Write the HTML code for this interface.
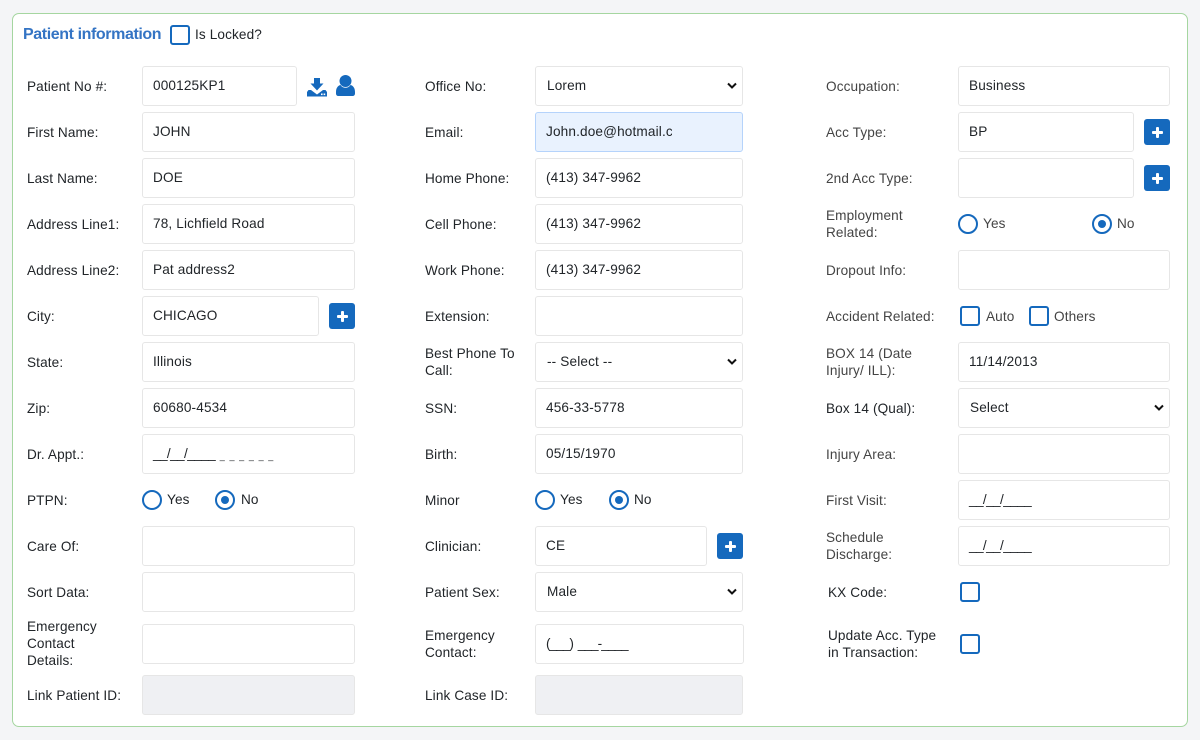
<!DOCTYPE html>
<html lang="en">
<head>
<meta charset="utf-8">
<title>Patient information</title>
<style>
html,body{margin:0;padding:0;width:1200px;height:740px;overflow:hidden;background:#f4f5f7;font-family:"Liberation Sans",Arial,sans-serif;font-size:13.6px;color:#212529}
#card{position:absolute;left:12px;top:13px;width:1174px;height:712px;background:#fff;border:1px solid #a5d6a0;border-radius:7px}
.l,.i,.t,.b,.c,.r,svg.a{position:absolute}
.l{line-height:17px;white-space:nowrap;letter-spacing:.12px}
.g{color:#444}
.i{height:38px;line-height:38px;box-sizing:content-box;border:1px solid #e6e6e6;border-radius:3px;background:#fff;padding:0;overflow:hidden;white-space:nowrap}
.i span{position:absolute;left:10px;top:0;white-space:pre;letter-spacing:.15px}
.i span.u{letter-spacing:-.6px}
.i span.u i{font-style:normal;font-size:9px;word-spacing:2.2px;letter-spacing:0;position:relative;top:1px}
.i span.p{letter-spacing:-.95px;word-spacing:2px}
.s span{left:11px}
.s svg{position:absolute;right:5px;top:15px}
.b{width:26px;height:26px;background:#1569bd;border-radius:3px}
.b:before{content:"";position:absolute;left:7.5px;top:11.5px;width:11px;height:3px;background:#fff;border-radius:1px}
.b:after{content:"";position:absolute;left:11.5px;top:7.5px;width:3px;height:11px;background:#fff;border-radius:1px}
.c{width:16px;height:16px;border:2px solid #1569bd;border-radius:3px;background:#fff}
.r{width:16px;height:16px;border:2px solid #1569bd;border-radius:50%;background:#fff}
.r.on:after{content:"";position:absolute;left:4px;top:4px;width:8px;height:8px;border-radius:50%;background:#1569bd}
.dis{background:#eff0f3}
.foc{background:#e9f2fe;border-color:#b5d3fb}
#title{position:absolute;left:23px;top:25px;font-size:16px;line-height:19px;font-weight:bold;color:#3474c4;letter-spacing:-.4px}
</style>
</head>
<body>
<div id="card"></div>
<div id="title">Patient information</div>
<div class="c" style="left:170px;top:25px"></div>
<div class="l" style="left:195px;top:26px">Is Locked?</div>

<!-- column 1 -->
<div class="l" style="left:27px;top:78px">Patient No #:</div>
<div class="i" style="left:142px;top:66px;width:153px"><span>000125KP1</span></div>
<svg class="a" style="left:307px;top:78px" width="20" height="19" viewBox="0 0 20 19"><path fill="#1569bd" d="M7 0h6v5.500h3.500L10 12.500 3.500 5.500H7z"/><path fill="#1569bd" d="M1.500 12H4l6 4.500L16 12h2.500l1.500 2v4.500H0V14z"/><rect x="14" y="15.500" width="1.600" height="1.600" fill="#fff"/><rect x="16.600" y="15.500" width="1.600" height="1.600" fill="#fff"/></svg>
<svg class="a" style="left:336px;top:75px" width="19" height="21" viewBox="0 0 19 21"><circle cx="9.500" cy="6" r="6" fill="#1569bd"/><path fill="#1569bd" d="M0 17c0-4 2-6.500 4.500-7 1.200 1.800 3 2.800 5 2.800s3.800-1 5-2.800c2.500.5 4.500 3 4.500 7v1.500c0 1.500-1 2.500-2.500 2.500h-14C1 21 0 20 0 18.500z"/></svg>
<div class="l" style="left:27px;top:124px">First Name:</div>
<div class="i" style="left:142px;top:112px;width:211px"><span>JOHN</span></div>
<div class="l" style="left:27px;top:170px">Last Name:</div>
<div class="i" style="left:142px;top:158px;width:211px"><span>DOE</span></div>
<div class="l" style="left:27px;top:216px">Address Line1:</div>
<div class="i" style="left:142px;top:204px;width:211px"><span>78, Lichfield Road</span></div>
<div class="l" style="left:27px;top:262px">Address Line2:</div>
<div class="i" style="left:142px;top:250px;width:211px"><span>Pat address2</span></div>
<div class="l" style="left:27px;top:308px">City:</div>
<div class="i" style="left:142px;top:296px;width:175px"><span>CHICAGO</span></div>
<div class="b" style="left:329px;top:303px"></div>
<div class="l" style="left:27px;top:354px">State:</div>
<div class="i" style="left:142px;top:342px;width:211px"><span>Illinois</span></div>
<div class="l" style="left:27px;top:400px">Zip:</div>
<div class="i" style="left:142px;top:388px;width:211px"><span>60680-4534</span></div>
<div class="l" style="left:27px;top:446px">Dr. Appt.:</div>
<div class="i" style="left:142px;top:434px;width:211px"><span class="u">__/__/____<i> _ _ _ _ _ _</i></span></div>
<div class="l" style="left:27px;top:492px">PTPN:</div>
<div class="r" style="left:142px;top:490px"></div>
<div class="l" style="left:167px;top:491px">Yes</div>
<div class="r on" style="left:215px;top:490px"></div>
<div class="l" style="left:241px;top:491px">No</div>
<div class="l" style="left:27px;top:538px">Care Of:</div>
<div class="i" style="left:142px;top:526px;width:211px"></div>
<div class="l" style="left:27px;top:584px">Sort Data:</div>
<div class="i" style="left:142px;top:572px;width:211px"></div>
<div class="l" style="left:27px;top:618px">Emergency<br>Contact<br>Details:</div>
<div class="i" style="left:142px;top:624px;width:211px"></div>
<div class="l" style="left:27px;top:687px">Link Patient ID:</div>
<div class="i dis" style="left:142px;top:675px;width:211px"></div>

<!-- column 2 -->
<div class="l" style="left:425px;top:78px">Office No:</div>
<div class="i s" style="left:535px;top:66px;width:206px"><span>Lorem</span><svg width="10" height="8" viewBox="0 0 10 8"><path d="M1 1.500l4 4 4-4" fill="none" stroke="#111" stroke-width="2"/></svg></div>
<div class="l" style="left:425px;top:124px">Email:</div>
<div class="i foc" style="left:535px;top:112px;width:206px"><span style="width:126px;overflow:hidden">John.doe@hotmail.com</span></div>
<div class="l" style="left:425px;top:170px">Home Phone:</div>
<div class="i" style="left:535px;top:158px;width:206px"><span>(413) 347-9962</span></div>
<div class="l" style="left:425px;top:216px">Cell Phone:</div>
<div class="i" style="left:535px;top:204px;width:206px"><span>(413) 347-9962</span></div>
<div class="l" style="left:425px;top:262px">Work Phone:</div>
<div class="i" style="left:535px;top:250px;width:206px"><span>(413) 347-9962</span></div>
<div class="l" style="left:425px;top:308px">Extension:</div>
<div class="i" style="left:535px;top:296px;width:206px"></div>
<div class="l" style="left:425px;top:345px">Best Phone To<br>Call:</div>
<div class="i s" style="left:535px;top:342px;width:206px"><span>-- Select --</span><svg width="10" height="8" viewBox="0 0 10 8"><path d="M1 1.500l4 4 4-4" fill="none" stroke="#111" stroke-width="2"/></svg></div>
<div class="l" style="left:425px;top:400px">SSN:</div>
<div class="i" style="left:535px;top:388px;width:206px"><span>456-33-5778</span></div>
<div class="l" style="left:425px;top:446px">Birth:</div>
<div class="i" style="left:535px;top:434px;width:206px"><span>05/15/1970</span></div>
<div class="l" style="left:425px;top:492px">Minor</div>
<div class="r" style="left:535px;top:490px"></div>
<div class="l" style="left:560px;top:491px">Yes</div>
<div class="r on" style="left:609px;top:490px"></div>
<div class="l" style="left:634px;top:491px">No</div>
<div class="l" style="left:425px;top:538px">Clinician:</div>
<div class="i" style="left:535px;top:526px;width:170px"><span>CE</span></div>
<div class="b" style="left:717px;top:533px"></div>
<div class="l" style="left:425px;top:584px">Patient Sex:</div>
<div class="i s" style="left:535px;top:572px;width:206px"><span>Male</span><svg width="10" height="8" viewBox="0 0 10 8"><path d="M1 1.500l4 4 4-4" fill="none" stroke="#111" stroke-width="2"/></svg></div>
<div class="l" style="left:425px;top:627px">Emergency<br>Contact:</div>
<div class="i" style="left:535px;top:624px;width:207px"><span class="p">(___) ___-____</span></div>
<div class="l" style="left:425px;top:687px">Link Case ID:</div>
<div class="i dis" style="left:535px;top:675px;width:206px"></div>

<!-- column 3 -->
<div class="l g" style="left:826px;top:78px">Occupation:</div>
<div class="i" style="left:958px;top:66px;width:210px"><span>Business</span></div>
<div class="l g" style="left:826px;top:124px">Acc Type:</div>
<div class="i" style="left:958px;top:112px;width:174px"><span>BP</span></div>
<div class="b" style="left:1144px;top:119px"></div>
<div class="l g" style="left:826px;top:170px">2nd Acc Type:</div>
<div class="i" style="left:958px;top:158px;width:174px"></div>
<div class="b" style="left:1144px;top:165px"></div>
<div class="l g" style="left:826px;top:207px">Employment<br>Related:</div>
<div class="r" style="left:958px;top:214px"></div>
<div class="l g" style="left:983px;top:215px">Yes</div>
<div class="r on" style="left:1092px;top:214px"></div>
<div class="l g" style="left:1117px;top:215px">No</div>
<div class="l g" style="left:826px;top:262px">Dropout Info:</div>
<div class="i" style="left:958px;top:250px;width:210px"></div>
<div class="l g" style="left:826px;top:308px">Accident Related:</div>
<div class="c" style="left:960px;top:306px"></div>
<div class="l g" style="left:986px;top:308px">Auto</div>
<div class="c" style="left:1029px;top:306px"></div>
<div class="l g" style="left:1054px;top:308px">Others</div>
<div class="l g" style="left:826px;top:345px">BOX 14 (Date<br>Injury/ ILL):</div>
<div class="i" style="left:958px;top:342px;width:210px"><span>11/14/2013</span></div>
<div class="l" style="left:826px;top:400px">Box 14 (Qual):</div>
<div class="i s" style="left:958px;top:388px;width:210px"><span>Select</span><svg width="10" height="8" viewBox="0 0 10 8"><path d="M1 1.500l4 4 4-4" fill="none" stroke="#111" stroke-width="2"/></svg></div>
<div class="l g" style="left:826px;top:446px">Injury Area:</div>
<div class="i" style="left:958px;top:434px;width:210px"></div>
<div class="l g" style="left:826px;top:492px">First Visit:</div>
<div class="i" style="left:958px;top:480px;width:210px"><span class="u">__/__/____</span></div>
<div class="l g" style="left:826px;top:529px">Schedule<br>Discharge:</div>
<div class="i" style="left:958px;top:526px;width:210px"><span class="u">__/__/____</span></div>
<div class="l" style="left:828px;top:584px">KX Code:</div>
<div class="c" style="left:960px;top:582px"></div>
<div class="l" style="left:828px;top:627px">Update Acc. Type<br>in Transaction:</div>
<div class="c" style="left:960px;top:634px"></div>
</body>
</html>
